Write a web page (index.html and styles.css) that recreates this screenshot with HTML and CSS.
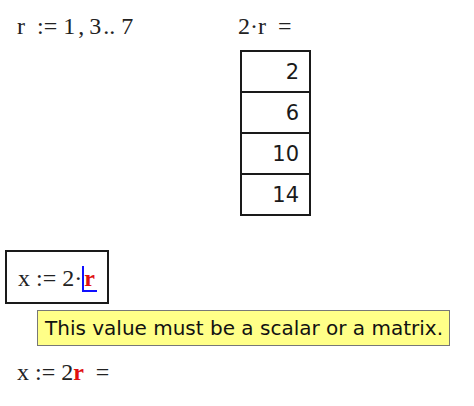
FILE: index.html
```html
<!DOCTYPE html>
<html>
<head>
<meta charset="utf-8">
<link rel="stylesheet" href="styles.css">
</head>
<body>
<div class="sheet">
  <div class="top">
    <div class="math def">r&nbsp;&nbsp;:=&nbsp;1<span class="sp">,</span>3<span class="dots">..</span>7</div>
    <div class="result">
      <div class="math">2·r&nbsp;&nbsp;=</div>
      <table class="matrix">
        <tr><td>2</td></tr>
        <tr><td>6</td></tr>
        <tr><td>10</td></tr>
        <tr><td>14</td></tr>
      </table>
    </div>
  </div>
  <div class="editing">
    <div class="box math">x&nbsp;:=&nbsp;2·<span class="cursor"><span class="err">r</span></span></div>
    <div class="tooltip">This value must be a scalar or a matrix.</div>
  </div>
  <div class="math last">x&nbsp;:=&nbsp;2<span class="err">r</span>&nbsp;&nbsp;=</div>
</div>
</body>
</html>
```

FILE: styles.css
```css
html, body {
  margin: 0;
  padding: 0;
  background: #ffffff;
}
.sheet {
  width: 474px;
  height: 406px;
  position: relative;
  overflow: hidden;
}
.math {
  font-family: "Liberation Serif", "Times New Roman", serif;
  font-size: 24px;
  color: #222;
  line-height: 26px;
  white-space: nowrap;
}
.sp {
  margin: 0 5px 0 3px;
}
.dots {
  margin: 0 6px 0 2px;
}
.top {
  display: flex;
  padding-top: 13px;
}
.def {
  margin-left: 17px;
  width: 221px;
}
.result {
  display: flex;
  flex-direction: column;
}
.matrix {
  border-collapse: collapse;
  margin-left: 2px;
  margin-top: 11px;
}
.matrix td {
  border: 2px solid #1a1a1a;
  width: 57px;
  height: 39px;
  padding: 0 10px 0 0;
  text-align: right;
  font-family: "DejaVu Sans", sans-serif;
  font-size: 21px;
  color: #1a1a1a;
}
.editing {
  position: relative;
  margin-top: 34px;
  margin-left: 5px;
  height: 102px;
}
.box {
  display: inline-block;
  border: 2px solid #1a1a1a;
  padding: 13px 10px 10px 11px;
}
.cursor {
  display: inline-block;
  border-left: 2px solid #1010ff;
  border-bottom: 2px solid #1010ff;
  padding-right: 2px;
  line-height: 24px;
}
.err {
  color: #e01010;
  font-weight: bold;
}
.tooltip {
  position: absolute;
  left: 32px;
  top: 60px;
  background: #ffff88;
  border: 1px solid #777;
  font-family: "DejaVu Sans", sans-serif;
  font-size: 20px;
  color: #111;
  padding: 5px 6px 5px 7px;
  white-space: nowrap;
}
.last {
  margin-left: 17px;
  margin-top: 7px;
}
```
